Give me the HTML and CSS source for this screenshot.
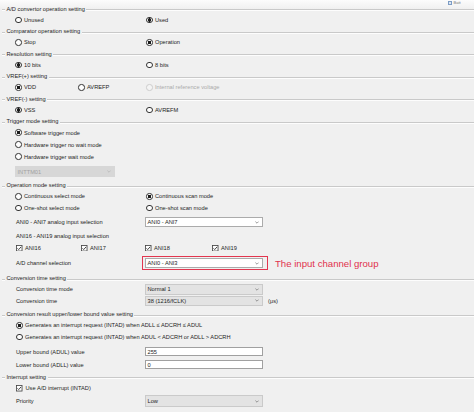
FILE: index.html
```html
<!DOCTYPE html>
<html>
<head>
<meta charset="utf-8">
<link rel="stylesheet" href="styles.css">
</head>
<body>
<div class="tb-item"><span class="tb-icon"></span><span>Batt</span></div>
<div class="topbar"></div>
<div class="panel">
  <div class="hdr"><span class="ln-s"></span><span class="ht">A/D convertor operation setting</span><span class="ln"></span></div>
  <div class="opts"><span class="opt"><span class="radio"></span>Unused</span><span class="opt c3"><span class="radio on"></span>Used</span></div>

  <div class="hdr"><span class="ln-s"></span><span class="ht">Comparator operation setting</span><span class="ln"></span></div>
  <div class="opts"><span class="opt"><span class="radio"></span>Stop</span><span class="opt c3"><span class="radio on"></span>Operation</span></div>

  <div class="hdr"><span class="ln-s"></span><span class="ht">Resolution setting</span><span class="ln"></span></div>
  <div class="opts"><span class="opt"><span class="radio on"></span>10 bits</span><span class="opt c3"><span class="radio"></span>8 bits</span></div>

  <div class="hdr"><span class="ln-s"></span><span class="ht">VREF(+) setting</span><span class="ln"></span></div>
  <div class="opts"><span class="opt"><span class="radio on"></span>VDD</span><span class="opt"><span class="radio"></span>AVREFP</span><span class="opt dis"><span class="radio dis-r"></span>Internal reference voltage</span></div>

  <div class="hdr"><span class="ln-s"></span><span class="ht">VREF(-) setting</span><span class="ln"></span></div>
  <div class="opts"><span class="opt"><span class="radio on"></span>VSS</span><span class="opt c3"><span class="radio"></span>AVREFM</span></div>

  <div class="hdr"><span class="ln-s"></span><span class="ht">Trigger mode setting</span><span class="ln"></span></div>
  <div class="opts v"><span class="opt"><span class="radio on"></span>Software trigger mode</span></div>
  <div class="opts v"><span class="opt"><span class="radio"></span>Hardware trigger no wait mode</span></div>
  <div class="opts v"><span class="opt"><span class="radio"></span>Hardware trigger wait mode</span></div>
  <div class="selrow"><div class="sel disabled"><span>INTTM01</span><svg class="chev" viewBox="0 0 4 3"><polyline points="0.4,0.6 2,2.2 3.6,0.6"/></svg></div></div>

  <div class="hdr"><span class="ln-s"></span><span class="ht">Operation mode setting</span><span class="ln"></span></div>
  <div class="opts"><span class="opt"><span class="radio"></span>Continuous select mode</span><span class="opt c3"><span class="radio on"></span>Continuous scan mode</span></div>
  <div class="opts v"><span class="opt"><span class="radio"></span>One-shot select mode</span><span class="opt c3"><span class="radio"></span>One-shot scan mode</span></div>
  <div class="frow h16"><span class="flabel">ANI0 - ANI7 analog input selection</span><div class="sel edit"><span>ANI0 - ANI7</span><svg class="chev" viewBox="0 0 4 3"><polyline points="0.4,0.6 2,2.2 3.6,0.6"/></svg></div></div>
  <div class="frow h11"><span class="flabel">ANI16 - ANI19 analog input selection</span></div>
  <div class="checks">
    <span class="opt"><svg class="cbox" viewBox="0 0 7 7"><rect x="0.5" y="0.5" width="6" height="6"/><polyline points="1.6,3.6 2.9,4.9 5.5,2"/></svg>ANI16</span>
    <span class="opt"><svg class="cbox" viewBox="0 0 7 7"><rect x="0.5" y="0.5" width="6" height="6"/><polyline points="1.6,3.6 2.9,4.9 5.5,2"/></svg>ANI17</span>
    <span class="opt"><svg class="cbox" viewBox="0 0 7 7"><rect x="0.5" y="0.5" width="6" height="6"/><polyline points="1.6,3.6 2.9,4.9 5.5,2"/></svg>ANI18</span>
    <span class="opt"><svg class="cbox" viewBox="0 0 7 7"><rect x="0.5" y="0.5" width="6" height="6"/><polyline points="1.6,3.6 2.9,4.9 5.5,2"/></svg>ANI19</span>
  </div>
  <div class="frow chan"><span class="flabel short">A/D channel selection</span><div class="mark"><div class="sel edit"><span>ANI0 - ANI3</span><svg class="chev" viewBox="0 0 4 3"><polyline points="0.4,0.6 2,2.2 3.6,0.6"/></svg></div></div><span class="note">The input channel group</span></div>

  <div class="hdr"><span class="ln-s"></span><span class="ht">Conversion time setting</span><span class="ln"></span></div>
  <div class="frow h115"><span class="flabel">Conversion time mode</span><div class="sel fixed"><span>Normal 1</span><svg class="chev" viewBox="0 0 4 3"><polyline points="0.4,0.6 2,2.2 3.6,0.6"/></svg></div></div>
  <div class="frow ctime"><span class="flabel">Conversion time</span><div class="sel fixed"><span>38 (1216/fCLK)</span><svg class="chev" viewBox="0 0 4 3"><polyline points="0.4,0.6 2,2.2 3.6,0.6"/></svg></div><span class="unit">(μs)</span></div>

  <div class="hdr"><span class="ln-s"></span><span class="ht">Conversion result upper/lower bound value setting</span><span class="ln"></span></div>
  <div class="opts single"><span class="opt"><span class="radio on"></span>Generates an interrupt request (INTAD) when ADLL ≤ ADCRH ≤ ADUL</span></div>
  <div class="opts single"><span class="opt"><span class="radio"></span>Generates an interrupt request (INTAD) when ADUL &lt; ADCRH or ADLL &gt; ADCRH</span></div>
  <div class="frow up"><span class="flabel">Upper bound (ADUL) value</span><div class="txt">255</div></div>
  <div class="frow h13"><span class="flabel">Lower bound (ADLL) value</span><div class="txt">0</div></div>

  <div class="hdr"><span class="ln-s"></span><span class="ht">Interrupt setting</span><span class="ln"></span></div>
  <div class="opts single h125"><span class="opt g3"><svg class="cbox" viewBox="0 0 7 7"><rect x="0.5" y="0.5" width="6" height="6"/><polyline points="1.6,3.6 2.9,4.9 5.5,2"/></svg>Use A/D interrupt (INTAD)</span></div>
  <div class="frow h13"><span class="flabel">Priority</span><div class="sel fixed tall"><span>Low</span><svg class="chev" viewBox="0 0 4 3"><polyline points="0.4,0.6 2,2.2 3.6,0.6"/></svg></div></div>
</div>
</body>
</html>
```
FILE: styles.css
```css
* { box-sizing: border-box; }
html, body { margin: 0; padding: 0; }
body {
  position: relative;
  width: 474px;
  height: 412px;
  overflow: hidden;
  background: #f0f0f0 linear-gradient(#fcfcfc, #f0f0f0 9px) no-repeat;
  font-family: "Liberation Sans", Arial, sans-serif;
  font-size: 5.7px;
  color: #1e1e1e;
}
.topbar { height: 3px; }
.tb-item {
  position: absolute;
  top: 0;
  right: 1px;
  width: 25px;
  height: 5px;
  display: flex;
  align-items: center;
  gap: 1.5px;
  font-size: 4px;
  line-height: 5px;
  color: #777;
}
.tb-icon {
  width: 4px;
  height: 4px;
  border: 1px solid #7d9cc4;
  background: #dbe6f3;
}
.hdr {
  height: 11px;
  display: flex;
  align-items: center;
}
.ln, .ln-s {
  height: 2px;
  margin-top: 3.5px;
  border-top: 1px solid #c9c9c9;
  border-bottom: 1px solid #fdfdfd;
}
.ln-s { width: 3.5px; margin-left: 1.5px; flex: none; }
.ln { flex: 1; }
.ht { padding: 0 1.5px; white-space: nowrap; }

.opts {
  height: 11.5px;
  display: grid;
  grid-template-columns: 63px 68px 1fr;
  align-items: center;
  padding-left: 15px;
}
.opts.v { height: 12px; }
.opts.single { display: flex; padding-left: 16px; }
.opts.h125 { height: 12.5px; }
.c3 { grid-column: 3; }
.opt {
  display: flex;
  align-items: center;
  gap: 2.5px;
  white-space: nowrap;
}
.opt.g3 { gap: 3px; }
.radio {
  flex: none;
  width: 6.5px;
  height: 6.5px;
  border: 1px solid #333;
  border-radius: 50%;
  background: #fff;
}
.radio.on { background: radial-gradient(circle, #1a1a1a 0 1.6px, #fff 2px); }
.dis { color: #ababab; }
.radio.dis-r { border-color: #cdcdcd; background: #f4f4f4; }

.cbox {
  flex: none;
  width: 6.5px;
  height: 6.5px;
}
.cbox rect { fill: #fff; stroke: #444; stroke-width: 0.9; }
.cbox polyline { fill: none; stroke: #222; stroke-width: 0.9; }

.checks {
  height: 14px;
  display: grid;
  grid-template-columns: 65px 64px 67px 1fr;
  align-items: center;
  padding-left: 16px;
}

.selrow { height: 17px; padding: 3.5px 0 0 15px; }

.frow {
  display: flex;
  align-items: center;
  padding-left: 16px;
  white-space: nowrap;
}
.h16 { height: 16px; }
.h11 { height: 11px; }
.h115 { height: 11.5px; }
.h13 { height: 13px; }
.chan { height: 17.5px; padding-top: 1px; padding-bottom: 2.5px; }
.ctime { height: 13.5px; padding-bottom: 2px; }
.up { height: 15.5px; padding-top: 2.5px; }
.flabel { width: 129px; flex: none; }
.flabel.short { width: 126px; }

.sel {
  width: 118px;
  height: 10.5px;
  display: flex;
  align-items: center;
  justify-content: space-between;
  padding: 0 3px 0 1.5px;
  border: 1px solid #b4b4b4;
  white-space: nowrap;
}
.sel.edit { background: #fff; border-color: #ababab; }
.sel.fixed { background: #e3e3e3; border-color: #cacaca; }
.sel.tall { height: 11.5px; }
.sel.disabled {
  width: 100px;
  height: 11px;
  background: #d7d7d7;
  border-color: #d7d7d7;
  color: #a2a2a2;
}
.chev { width: 4px; height: 3px; fill: none; stroke: #707070; stroke-width: 0.7; }
.sel.disabled .chev { stroke: #b5b5b5; }

.mark {
  border: 1px solid #e2364f;
  padding: 1px 4px 1px 2px;
  height: 14px;
  display: flex;
  align-items: center;
}
.mark .sel { height: 10px; }
.note {
  margin-left: 7px;
  font-size: 9.6px;
  color: #e0304c;
}
.unit { margin-left: 5px; }

.txt {
  width: 118px;
  height: 9.5px;
  display: flex;
  align-items: center;
  padding-left: 1.5px;
  background: #fff;
  border: 1px solid #a0a0a0;
}
```
